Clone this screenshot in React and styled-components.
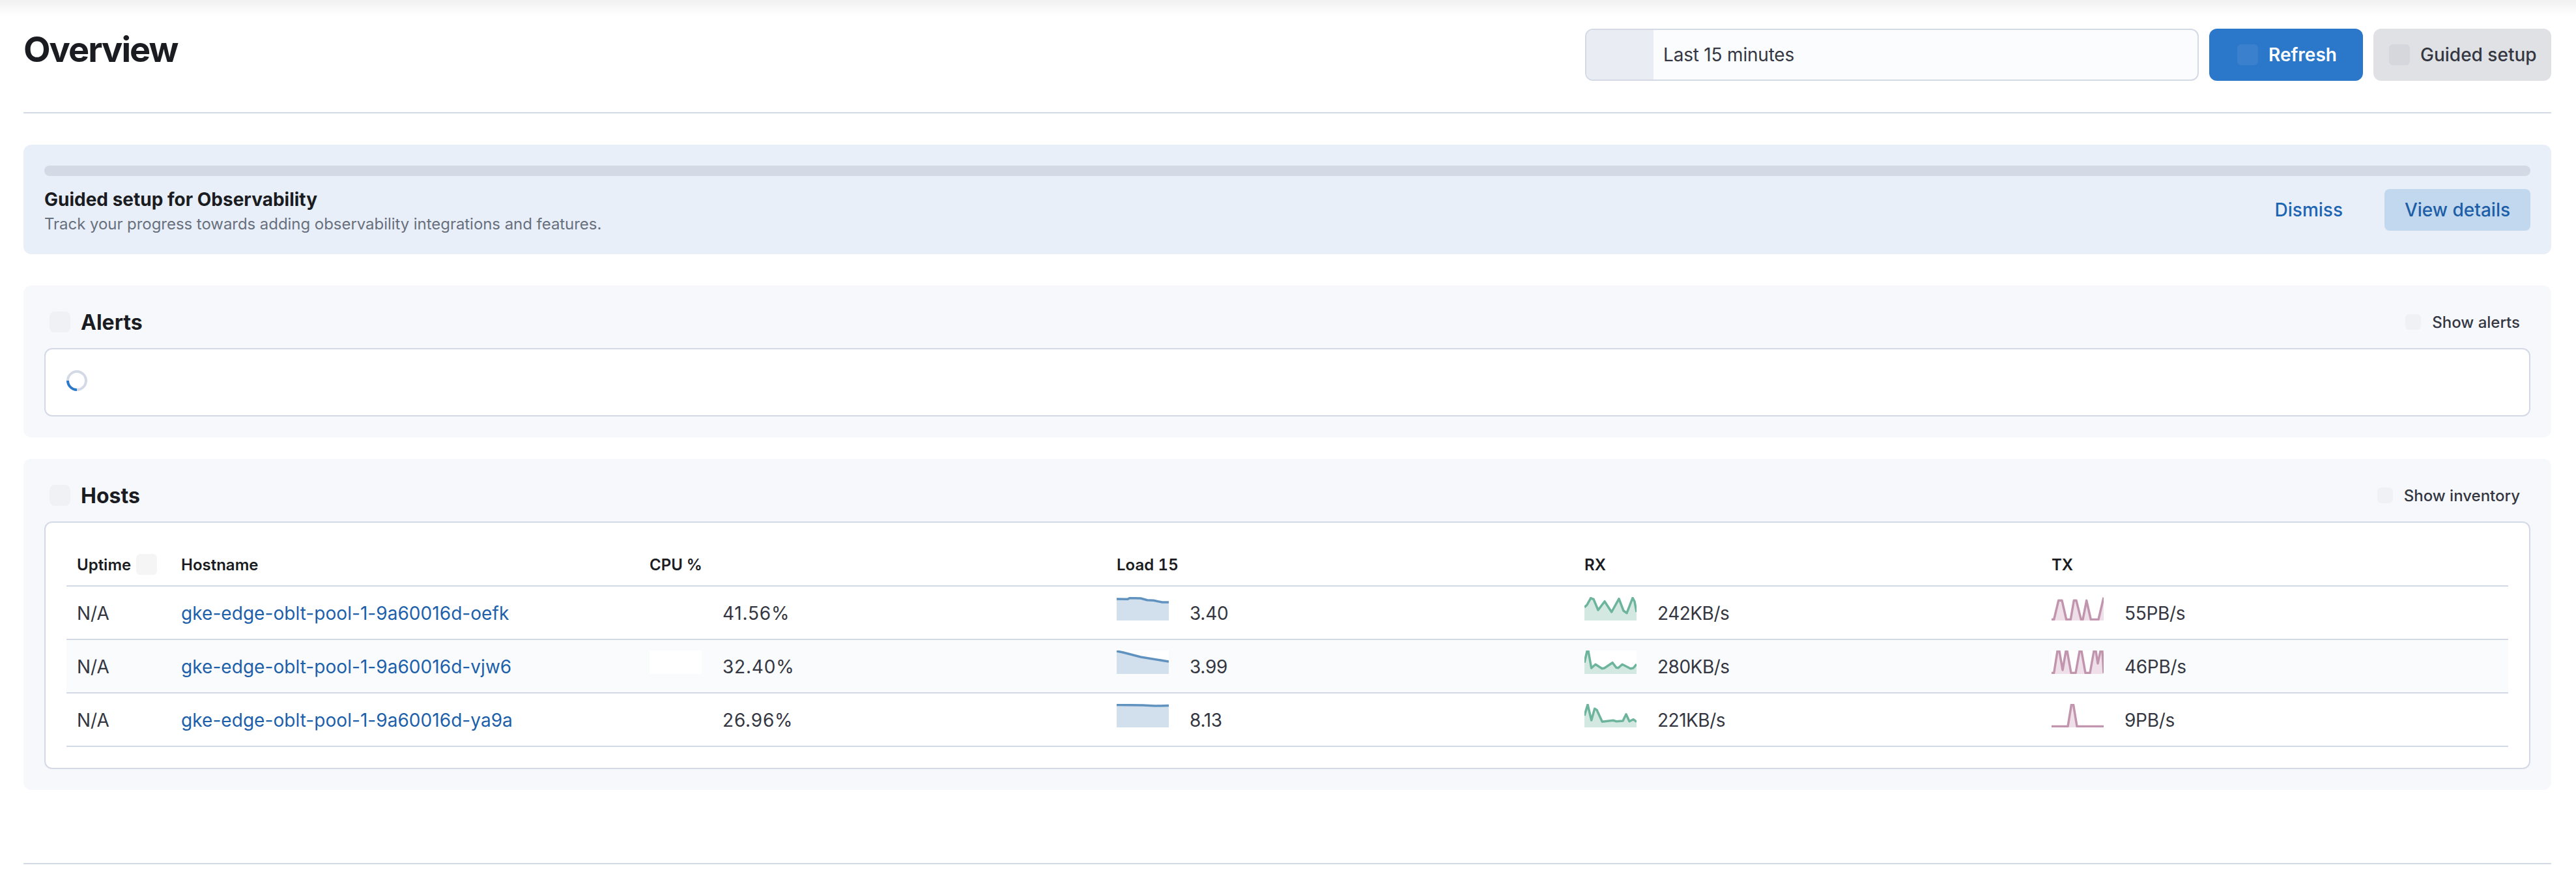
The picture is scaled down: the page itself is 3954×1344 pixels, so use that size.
import React from 'react';
import styled, { createGlobalStyle } from 'styled-components';

const GlobalStyle = createGlobalStyle`
  html, body {
    margin: 0;
    padding: 0;
    background: #fff;
  }
  body {
    font-family: Inter, "Liberation Sans", sans-serif;
    color: #343741;
  }
`;

const Page = styled.div`
  box-sizing: border-box;
  width: 3954px;
  height: 1344px;
  padding: 44px 38px 0 36px;
  background: linear-gradient(#f1f1f1, #fff 24px) no-repeat;
  overflow: hidden;
`;

const Header = styled.header`
  display: flex;
  justify-content: space-between;
  align-items: flex-start;
  padding-bottom: 48px;
  border-bottom: 2px solid #d3dae6;
`;

const Title = styled.h1`
  margin: 0;
  font-size: 54px;
  font-weight: 700;
  line-height: 64px;
  letter-spacing: -2px;
  color: #1a1c21;
`;

const Controls = styled.div`
  display: flex;
  gap: 16px;
`;

const DatePicker = styled.div`
  box-sizing: border-box;
  display: flex;
  align-items: center;
  width: 942px;
  height: 80px;
  border: 2px solid #d3dae6;
  border-radius: 12px;
  background: #fbfcfe;
  overflow: hidden;
`;

const DatePrepend = styled.div`
  align-self: stretch;
  width: 103px;
  background: #e9edf3;
`;

const DateText = styled.span`
  margin-left: 15px;
  font-size: 28px;
  letter-spacing: -0.2px;
  color: #343741;
`;

const HeaderButton = styled.button`
  box-sizing: border-box;
  display: flex;
  align-items: center;
  gap: 16px;
  width: ${p => p.$width}px;
  height: 80px;
  padding: 0 0 0 ${p => p.$inset}px;
  border: 0;
  border-radius: 12px;
  background: ${p => p.$bg};
  color: ${p => p.$color};
  font-family: inherit;
  font-size: 28px;
  font-weight: ${p => p.$weight};
`;

const ButtonIcon = styled.span`
  width: 32px;
  height: 32px;
  border-radius: 6px;
  background: ${p => p.$bg};
`;

const GuidePanel = styled.section`
  box-sizing: border-box;
  height: 168px;
  margin-top: 48px;
  padding: 32px;
  border-radius: 12px;
  background: #e8eff9;
`;

const ProgressTrack = styled.div`
  height: 16px;
  border-radius: 8px;
  background: #d3dae6;
`;

const GuideRow = styled.div`
  display: flex;
  justify-content: space-between;
  align-items: flex-start;
  margin-top: 20px;
`;

const GuideTitle = styled.div`
  font-size: 28px;
  font-weight: 700;
  line-height: 32px;
  color: #1a1c21;
`;

const GuideText = styled.div`
  margin-top: 6px;
  font-size: 24px;
  line-height: 32px;
  letter-spacing: -0.05px;
  color: #69707d;
`;

const GuideActions = styled.div`
  display: flex;
  align-items: center;
  gap: 64px;
`;

const DismissLink = styled.span`
  font-size: 28px;
  font-weight: 500;
  color: #1d64b3;
`;

const ViewButton = styled.button`
  width: 224px;
  height: 64px;
  border: 0;
  border-radius: 8px;
  background: #c2d8ef;
  color: #1d5ea6;
  font-family: inherit;
  font-size: 28px;
  font-weight: 500;
`;

const Panel = styled.section`
  box-sizing: border-box;
  margin-top: ${p => p.$top}px;
  padding: 32px;
  border-radius: 12px;
  background: #f6f8fc;
`;

const PanelHead = styled.div`
  display: flex;
  justify-content: space-between;
  align-items: center;
  height: 32px;
  padding: 8px 16px 24px 8px;
`;

const PanelTitle = styled.div`
  display: flex;
  align-items: center;
  gap: 16px;
  font-size: 32px;
  font-weight: 700;
  color: #1a1c21;
`;

const SkeletonIcon = styled.span`
  width: 32px;
  height: 32px;
  border-radius: 8px;
  background: #eff1f5;
`;

const ShowToggle = styled.div`
  display: flex;
  align-items: center;
  gap: 17px;
  font-size: 24px;
  font-weight: 500;
  color: #343741;
`;

const ToggleBox = styled.span`
  width: 24px;
  height: 24px;
  border-radius: 6px;
  background: #eff1f5;
`;

const InnerBox = styled.div`
  box-sizing: border-box;
  height: ${p => p.$height}px;
  padding: ${p => p.$pad};
  border: 2px solid #d3dae6;
  border-radius: 12px;
  background: #fff;
`;

const Spinner = styled.div`
  box-sizing: border-box;
  width: 32px;
  height: 32px;
  border: 4px solid #d3dae6;
  border-bottom-color: #2b77c9;
  border-radius: 50%;
  transform: rotate(45deg);
`;

const Table = styled.table`
  width: 3748px;
  table-layout: fixed;
  border-collapse: separate;
  border-spacing: 0;
`;

const HeadCell = styled.th`
  box-sizing: border-box;
  width: ${p => p.$width}px;
  height: 66px;
  padding: 0 16px;
  border-bottom: 2px solid #d3dae6;
  text-align: left;
  font-size: 24px;
  font-weight: 600;
  font-variant-numeric: ${p => (p.$numeric ? 'tabular-nums' : 'normal')};
  color: #1a1c21;
`;

const HeadLabel = styled.div`
  display: flex;
  align-items: center;
  gap: 8px;
`;

const SortBox = styled.span`
  width: 32px;
  height: 32px;
  border-radius: 6px;
  background: #f5f5f5;
`;

const Row = styled.tr`
  background: ${p => (p.$striped ? '#fafbfd' : '#fff')};
`;

const Cell = styled.td`
  box-sizing: border-box;
  height: 82px;
  padding: 2px 16px 0;
  border-bottom: 2px solid #d3dae6;
  font-size: 28px;
  color: #343741;
`;

const HostLink = styled.a`
  color: #1d60aa;
  letter-spacing: 0.05px;
  text-decoration: none;
`;

const Metric = styled.div`
  display: flex;
  align-items: center;
  gap: 32px;
`;

const MetricValue = styled.span`
  letter-spacing: ${p => p.$tracking}px;
`;

const ChartSlot = styled.div`
  flex: none;
  width: 80px;
  height: 36px;
  margin-bottom: 14px;
  background: ${p => (p.$striped ? '#fff' : 'transparent')};

  svg {
    display: block;
  }
`;

const Footer = styled.div`
  margin-top: 112px;
  border-top: 2px solid #d3dae6;
`;

const COLORS = {
  load: { line: '#6092c0', area: '#d2dfec' },
  rx: { line: '#6db49d', area: '#d3e8e1' },
  tx: { line: '#c295ae', area: '#eedfe8' }
};

const Sparkline = ({ points, kind, striped }) => {
  const line = points.map(p => p.join(',')).join(' ');
  const first = points[0][0];
  const last = points[points.length - 1][0];
  return (
    <ChartSlot $striped={striped}>
      <svg width="80" height="36" viewBox="0 0 80 36">
        <polygon points={`${first},36 ${line} ${last},36`} fill={COLORS[kind].area} />
        <polyline points={line} fill="none" stroke={COLORS[kind].line} strokeWidth="3.5" strokeLinejoin="round" />
      </svg>
    </ChartSlot>
  );
};

const HOSTS = [
  {
    name: 'gke-edge-oblt-pool-1-9a60016d-oefk',
    cpu: '41.56%',
    load: '3.40',
    rx: '242KB/s',
    tx: '55PB/s',
    loadLine: [[0, 3], [17, 3.2], [20, 1.5], [37, 2], [47, 4.7], [57, 5.3], [70, 8], [80, 8]],
    rxLine: [[0, 15.6], [4, 12], [9.7, 1.7], [14, 3.3], [21, 20], [31, 6.7], [41.7, 23], [53, 2.7], [60, 21], [65, 24.7], [74, 1.3], [77, 7], [80, 23]],
    txLine: [[0, 34.5], [3.7, 34.5], [10.7, 5.3], [16, 5.3], [22.7, 34.5], [29.3, 34.5], [34.3, 5.3], [38, 5.3], [45.3, 34.5], [48, 34.5], [53.7, 5.3], [60.3, 34.5], [72, 34.5], [80, 0.7]]
  },
  {
    name: 'gke-edge-oblt-pool-1-9a60016d-vjw6',
    cpu: '32.40%',
    load: '3.99',
    rx: '280KB/s',
    tx: '46PB/s',
    loadLine: [[0, 1], [10, 3], [37, 10], [80, 17]],
    rxLine: [[0, 18.7], [4, 1], [6, 1], [10.7, 27], [17, 21.3], [27, 27.7], [30.7, 27], [43, 18.7], [49, 26.3], [52, 26.7], [58, 21.3], [70.7, 27.7], [75, 27], [80, 21]],
    txLine: [[0, 34.5], [3.7, 34.5], [9, 1], [12, 1], [17, 30], [22, 1], [24, 1], [30, 34.5], [37, 34.5], [43, 1], [46, 1], [52, 34.5], [59, 34.5], [65, 1], [68, 1], [71, 20], [75, 1], [78, 1], [80, 34.5]]
  },
  {
    name: 'gke-edge-oblt-pool-1-9a60016d-ya9a',
    cpu: '26.96%',
    load: '8.13',
    rx: '221KB/s',
    tx: '9PB/s',
    loadLine: [[0, 1.5], [40, 2], [60, 3], [80, 2.5]],
    rxLine: [[0, 18], [5, 1], [10.7, 25], [15.7, 7.3], [19, 9.3], [27.3, 27.3], [44, 25.3], [49, 26.7], [59, 26], [64, 15.7], [69, 26.7], [75, 23.7], [80, 27.3]],
    txLine: [[0, 34.5], [25, 34.5], [30.5, 1], [33.5, 1], [39, 34.5], [80, 34.5]]
  }
];

const App = () => (
  <Page>
    <GlobalStyle />
    <Header>
      <Title>Overview</Title>
      <Controls>
        <DatePicker>
          <DatePrepend />
          <DateText>Last 15 minutes</DateText>
        </DatePicker>
        <HeaderButton $width={236} $inset={43} $bg="#2b77c9" $color="#fff" $weight={600}>
          <ButtonIcon $bg="#3a80cd" />
          Refresh
        </HeaderButton>
        <HeaderButton $width={273} $inset={24} $bg="#e0e1e5" $color="#343741" $weight={500}>
          <ButtonIcon $bg="#d5d7dc" />
          Guided setup
        </HeaderButton>
      </Controls>
    </Header>

    <GuidePanel>
      <ProgressTrack />
      <GuideRow>
        <div>
          <GuideTitle>Guided setup for Observability</GuideTitle>
          <GuideText>Track your progress towards adding observability integrations and features.</GuideText>
        </div>
        <GuideActions>
          <DismissLink>Dismiss</DismissLink>
          <ViewButton>View details</ViewButton>
        </GuideActions>
      </GuideRow>
    </GuidePanel>

    <Panel $top={48}>
      <PanelHead>
        <PanelTitle><SkeletonIcon />Alerts</PanelTitle>
        <ShowToggle><ToggleBox />Show alerts</ShowToggle>
      </PanelHead>
      <InnerBox $height={105} $pad="32px">
        <Spinner />
      </InnerBox>
    </Panel>

    <Panel $top={33}>
      <PanelHead>
        <PanelTitle><SkeletonIcon />Hosts</PanelTitle>
        <ShowToggle><ToggleBox />Show inventory</ShowToggle>
      </PanelHead>
      <InnerBox $height={380} $pad="32px">
        <Table>
          <thead>
            <tr>
              <HeadCell $width={160}>
                <HeadLabel>Uptime<SortBox /></HeadLabel>
              </HeadCell>
              <HeadCell $width={719}>Hostname</HeadCell>
              <HeadCell $width={717}>CPU %</HeadCell>
              <HeadCell $width={718} $numeric>Load 15</HeadCell>
              <HeadCell $width={717}>RX</HeadCell>
              <HeadCell $width={717}>TX</HeadCell>
            </tr>
          </thead>
          <tbody>
            {HOSTS.map((host, i) => {
              const striped = i === 1;
              return (
                <Row key={host.name} $striped={striped}>
                  <Cell>N/A</Cell>
                  <Cell><HostLink>{host.name}</HostLink></Cell>
                  <Cell>
                    <Metric>
                      <ChartSlot $striped={striped} />
                      <MetricValue $tracking={0.8}>{host.cpu}</MetricValue>
                    </Metric>
                  </Cell>
                  <Cell>
                    <Metric>
                      <Sparkline points={host.loadLine} kind="load" striped={striped} />
                      <MetricValue $tracking={-0.3}>{host.load}</MetricValue>
                    </Metric>
                  </Cell>
                  <Cell>
                    <Metric>
                      <Sparkline points={host.rxLine} kind="rx" striped={striped} />
                      <MetricValue $tracking={-0.5}>{host.rx}</MetricValue>
                    </Metric>
                  </Cell>
                  <Cell>
                    <Metric>
                      <Sparkline points={host.txLine} kind="tx" striped={striped} />
                      <MetricValue $tracking={-0.3}>{host.tx}</MetricValue>
                    </Metric>
                  </Cell>
                </Row>
              );
            })}
          </tbody>
        </Table>
      </InnerBox>
    </Panel>

    <Footer />
  </Page>
);

export default App;
